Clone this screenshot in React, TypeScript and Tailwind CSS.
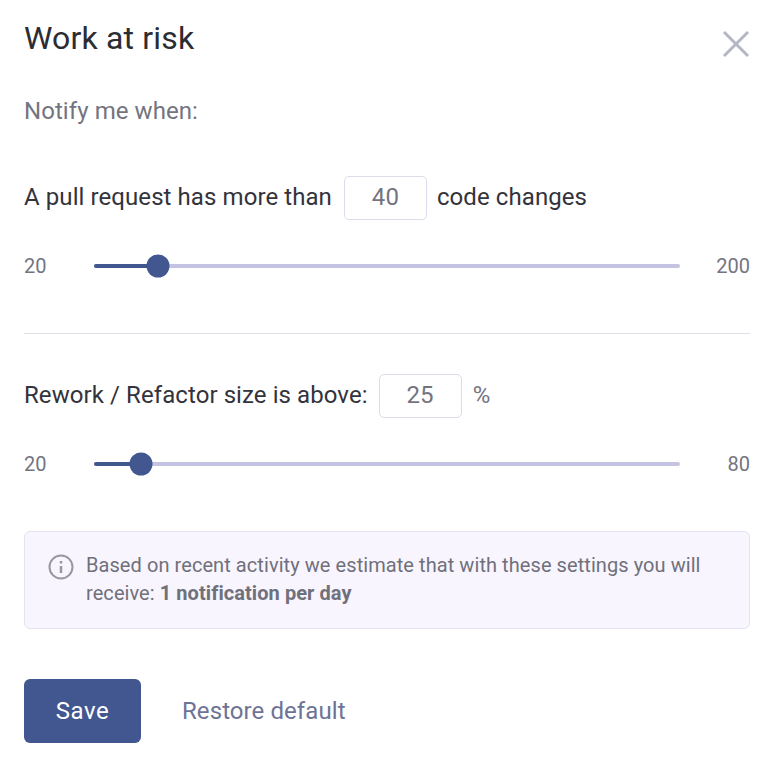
import React from 'react';

function Slider({ min, max, percent }: { min: string; max: string; percent: number }) {
  return (
    <div className="flex items-center justify-between h-[24px] text-[20px] text-[#74747f]">
      <span>{min}</span>
      <div className="relative w-[586px] ml-[48px] mr-auto h-[4px] rounded-full bg-[#c4c4e2]">
        <div className="h-full rounded-full bg-[#42568f]" style={{ width: `${percent}%` }} />
        <div
          className="absolute top-1/2 w-[23px] h-[23px] -translate-x-1/2 -translate-y-1/2 rounded-full bg-[#42568f]"
          style={{ left: `${percent}%` }}
        />
      </div>
      <span>{max}</span>
    </div>
  );
}

function NumberBox({ value }: { value: string }) {
  return (
    <div className="w-[83px] h-[44px] flex items-center justify-center rounded-[5px] border border-[#dcdcec] pb-[2px] text-[24px] text-[#74747f]">
      {value}
    </div>
  );
}

export default function App() {
  return (
    <div className="w-[778px] h-[761px] bg-white pl-[24px] pr-[28px] font-['Roboto',sans-serif] overflow-hidden">
      <div className="flex items-start justify-between pt-[18px]">
        <h1 className="text-[32px] leading-[40px] tracking-[0.17px] text-[#2c2c33]">Work at risk</h1>
        <svg className="mt-[12px]" width="28" height="28" viewBox="0 0 28 28" fill="none" stroke="#b4b7c3" strokeWidth="3">
          <path d="M2 2 L26 26 M26 2 L2 26" />
        </svg>
      </div>

      <p className="mt-[37px] text-[24px] leading-[32px] tracking-[0.07px] text-[#74747f]">Notify me when:</p>

      <div className="mt-[49px] flex items-center text-[24px] tracking-[0.08px] text-[#33333b] h-[44px]">
        <span className="mb-[2px]">A pull request has more than</span>
        <div className="ml-[12px] mr-[10px]">
          <NumberBox value="40" />
        </div>
        <span className="mb-[2px]">code changes</span>
      </div>
      <div className="mt-[34px]">
        <Slider min="20" max="200" percent={10.9} />
      </div>

      <div className="mt-[55px] h-px bg-[#dfdfea]" />

      <div className="mt-[40px] flex items-center text-[24px] tracking-[0.08px] text-[#33333b] h-[44px]">
        <span className="mb-[2px]">Rework / Refactor size is above:</span>
        <div className="ml-[11px] mr-[11px]">
          <NumberBox value="25" />
        </div>
        <span className="mb-[2px] text-[#74747f]">%</span>
      </div>
      <div className="mt-[34px]">
        <Slider min="20" max="80" percent={8} />
      </div>

      <div className="mt-[55px] h-[98px] flex items-start gap-[12px] rounded-[6px] border border-[#e4e1f1] bg-[#f8f5ff] pl-[23px] pr-[16px] pt-[19px] text-[20px] leading-[28px] tracking-[0.07px] text-[#70707b]">
        <svg className="mt-[3px] shrink-0" width="26" height="26" viewBox="0 0 26 26" fill="none" stroke="#97979f" strokeWidth="2">
          <circle cx="13" cy="13" r="11.5" />
          <path d="M13 12 V19" strokeWidth="2.5" />
          <path d="M13 7 V9.5" strokeWidth="2.5" />
        </svg>
        <p>
          Based on recent activity we estimate that with these settings you will receive:{' '}
          <strong className="font-bold">1 notification per day</strong>
        </p>
      </div>

      <div className="mt-[50px] flex items-center gap-[41px]">
        <button className="w-[117px] h-[64px] rounded-[6px] bg-[#42568f] text-[24px] tracking-[0.5px] text-white">Save</button>
        <span className="text-[24px] tracking-[0.08px] text-[#6e7396]">Restore default</span>
      </div>
    </div>
  );
}
